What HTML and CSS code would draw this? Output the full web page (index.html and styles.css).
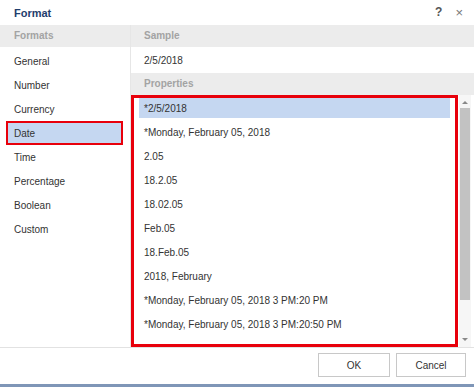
FILE: index.html
```html
<!DOCTYPE html>
<html lang="en">
<head>
    <meta charset="UTF-8">
    <meta name="viewport" content="width=device-width, initial-scale=1.0">
    <title>Format</title>
    <link rel="stylesheet" href="styles.css">
</head>
<body>
    <div class="dialog">
        <div class="titlebar">
            <span class="title">Format</span>
            <span class="tools">
                <span class="help">?</span>
                <span class="close">&times;</span>
            </span>
        </div>

        <div class="main">
            <div class="formats">
                <div class="col-head">Formats</div>
                <ul class="format-list">
                    <li>General</li>
                    <li>Number</li>
                    <li>Currency</li>
                    <li class="selected marked">Date</li>
                    <li>Time</li>
                    <li>Percentage</li>
                    <li>Boolean</li>
                    <li>Custom</li>
                </ul>
            </div>

            <div class="details">
                <div class="col-head">Sample</div>
                <div class="sample">2/5/2018</div>
                <div class="col-head">Properties</div>
                <div class="props">
                    <ul class="prop-list">
                        <li class="selected">*2/5/2018</li>
                        <li>*Monday, February 05, 2018</li>
                        <li>2.05</li>
                        <li>18.2.05</li>
                        <li>18.02.05</li>
                        <li>Feb.05</li>
                        <li>18.Feb.05</li>
                        <li>2018, February</li>
                        <li>*Monday, February 05, 2018 3 PM:20 PM</li>
                        <li>*Monday, February 05, 2018 3 PM:20:50 PM</li>
                        <li>02.05.2018</li>
                    </ul>
                    <div class="scrollbar">
                        <span class="arrow up"></span>
                        <div class="thumb"></div>
                        <span class="arrow down"></span>
                    </div>
                </div>
            </div>
        </div>

        <div class="footer">
            <button class="btn ok">OK</button>
            <button class="btn cancel">Cancel</button>
        </div>
        <div class="frame-bottom"></div>
    </div>
</body>
</html>
```

FILE: styles.css
```css
body {
    margin: 0;
    font-family: "Liberation Sans", Arial, sans-serif;
    font-size: 10px;
    color: #333;
    background: #fff;
}
.dialog {
    width: 474px;
    height: 387px;
    display: flex;
    flex-direction: column;
    overflow: hidden;
}
.titlebar {
    height: 25px;
    flex: none;
    display: flex;
    align-items: center;
    justify-content: space-between;
    padding: 0 11px 0 14px;
}
.title {
    font-size: 11px;
    font-weight: bold;
    color: #1f3d6c;
}
.tools {
    display: flex;
    gap: 13px;
    color: #555;
    font-weight: bold;
}
.help {
    font-size: 12px;
}
.close {
    font-size: 13px;
    font-weight: normal;
    color: #777;
}
.main {
    height: 322px;
    flex: none;
    display: flex;
}
.col-head {
    height: 22px;
    line-height: 22px;
    background: #ececec;
    color: #a3a3a3;
    font-weight: bold;
    padding-left: 13px;
}
.formats {
    width: 130px;
    flex: none;
    border-right: 1px solid #e6e6e6;
}
.formats .col-head {
    padding-left: 14px;
}
ul {
    list-style: none;
    margin: 0;
    padding: 0;
}
.format-list {
    padding-top: 4px;
    display: flex;
    flex-direction: column;
    gap: 4px;
}
.format-list li {
    height: 19px;
    line-height: 19px;
    padding-top: 1px;
    margin: 0 9px 0 8px;
    padding-left: 6px;
}
.selected {
    background: #c5d7f1;
}
.marked {
    outline: 2px solid #e8000b;
}
.details {
    flex: 1;
    display: flex;
    flex-direction: column;
}
.sample {
    height: 25px;
    line-height: 25px;
    padding: 1px 0 0 13px;
}
.props {
    flex: 1;
    display: flex;
    min-height: 0;
}
.prop-list {
    flex: 1;
    padding-top: 3px;
    display: flex;
    flex-direction: column;
    gap: 4px;
    overflow: hidden;
    outline: 3px solid #e8000b;
    outline-offset: -3px;
}
.prop-list li {
    flex: none;
    height: 19px;
    line-height: 19px;
    padding-top: 1px;
    margin: 0 8px;
    padding-left: 5px;
    white-space: nowrap;
}
.scrollbar {
    width: 12px;
    margin: 0 3px 0 1px;
    padding: 2px 0;
    background: #f6f6f6;
    display: flex;
    flex-direction: column;
    align-items: center;
}
.arrow {
    width: 0;
    height: 0;
    border-left: 3px solid transparent;
    border-right: 3px solid transparent;
    margin: 4px 0;
}
.arrow.up {
    border-bottom: 3px solid #888;
}
.arrow.down {
    border-top: 3px solid #888;
    margin-top: auto;
}
.thumb {
    width: 10px;
    height: 192px;
    background: #c2c2c2;
}
.footer {
    height: 37px;
    flex: none;
    box-sizing: border-box;
    border-top: 1px solid #e2e2e2;
    display: flex;
    justify-content: flex-end;
    gap: 6px;
    padding: 5px 8px 0 0;
}
.btn {
    height: 24px;
    background: #fff;
    border: 1px solid #c8c8c8;
    font-family: inherit;
    font-size: 10px;
    color: #333;
    padding: 0;
}
.btn.ok {
    width: 72px;
}
.btn.cancel {
    width: 70px;
}
.frame-bottom {
    height: 3px;
    flex: none;
    background: #7f96b7;
}
```
